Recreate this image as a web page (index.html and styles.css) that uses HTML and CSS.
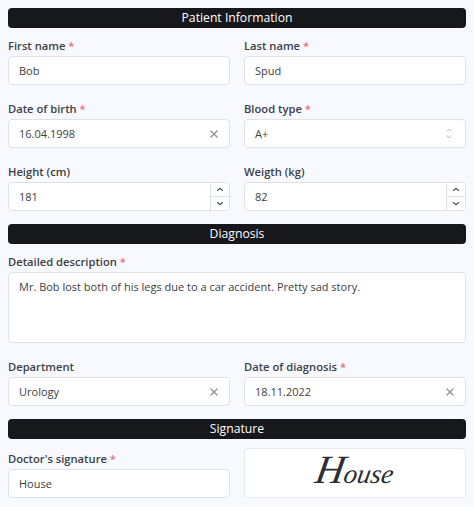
FILE: index.html
```html
<!DOCTYPE html>
<html lang="en">
<head>
    <meta charset="UTF-8">
    <meta name="viewport" content="width=device-width, initial-scale=1.0">
    <title>Patient form</title>
    <link rel="stylesheet" href="styles.css">
</head>
<body>
    <form class="form">
        <h2 class="section-title">Patient Information</h2>
        <div class="row">
            <div class="field">
                <label class="field-label">First name <span class="required">*</span></label>
                <div class="control">Bob</div>
            </div>
            <div class="field">
                <label class="field-label">Last name <span class="required">*</span></label>
                <div class="control">Spud</div>
            </div>
        </div>
        <div class="row">
            <div class="field">
                <label class="field-label">Date of birth <span class="required">*</span></label>
                <div class="control">
                    <span>16.04.1998</span>
                    <svg class="clear" viewBox="0 0 10 10"><path d="M1.5 1.5l7 7M8.5 1.5l-7 7"/></svg>
                </div>
            </div>
            <div class="field">
                <label class="field-label">Blood type <span class="required">*</span></label>
                <div class="control">
                    <span>A+</span>
                    <svg class="select-arrows" viewBox="0 0 10 16"><path d="M2 5.5L5 2.5l3 3M2 10.5l3 3 3-3"/></svg>
                </div>
            </div>
        </div>
        <div class="row">
            <div class="field">
                <label class="field-label">Height (cm)</label>
                <div class="control control-number">
                    <span class="number-value">181</span>
                    <div class="stepper">
                        <button type="button" class="step"><svg viewBox="0 0 10 6"><path d="M1.5 4.5L5 1.5l3.5 3"/></svg></button>
                        <button type="button" class="step"><svg viewBox="0 0 10 6"><path d="M1.5 1.5L5 4.5l3.5-3"/></svg></button>
                    </div>
                </div>
            </div>
            <div class="field">
                <label class="field-label">Weigth (kg)</label>
                <div class="control control-number">
                    <span class="number-value">82</span>
                    <div class="stepper">
                        <button type="button" class="step"><svg viewBox="0 0 10 6"><path d="M1.5 4.5L5 1.5l3.5 3"/></svg></button>
                        <button type="button" class="step"><svg viewBox="0 0 10 6"><path d="M1.5 1.5L5 4.5l3.5-3"/></svg></button>
                    </div>
                </div>
            </div>
        </div>

        <h2 class="section-title">Diagnosis</h2>
        <div class="row">
            <div class="field">
                <label class="field-label">Detailed description <span class="required">*</span></label>
                <div class="control control-area">Mr. Bob lost both of his legs due to a car accident. Pretty sad story.</div>
            </div>
        </div>
        <div class="row">
            <div class="field">
                <label class="field-label">Department</label>
                <div class="control">
                    <span>Urology</span>
                    <svg class="clear" viewBox="0 0 10 10"><path d="M1.5 1.5l7 7M8.5 1.5l-7 7"/></svg>
                </div>
            </div>
            <div class="field">
                <label class="field-label">Date of diagnosis <span class="required">*</span></label>
                <div class="control">
                    <span>18.11.2022</span>
                    <svg class="clear" viewBox="0 0 10 10"><path d="M1.5 1.5l7 7M8.5 1.5l-7 7"/></svg>
                </div>
            </div>
        </div>

        <h2 class="section-title">Signature</h2>
        <div class="row row-signature">
            <div class="field">
                <label class="field-label">Doctor's signature <span class="required">*</span></label>
                <div class="control">House</div>
            </div>
            <div class="signature-box"><span class="signature"><span class="signature-initial">H</span>ouse</span></div>
        </div>
    </form>
</body>
</html>
```

FILE: styles.css
```css
body {
    margin: 0;
    background: #f8f9fe;
    color: #212529;
    font-family: "Open Sans", "Noto Sans", sans-serif;
    font-size: 11px;
}

.form {
    padding: 8px 8px 0;
}

.section-title {
    margin: 13px 0 9px;
    height: 20px;
    line-height: 20px;
    background: #17181c;
    border-radius: 4px;
    color: #fff;
    font-size: 12.2px;
    font-weight: 400;
    text-align: center;
}

.section-title:first-child {
    margin-top: 0;
}

.row {
    display: flex;
    gap: 14px;
}

.row + .row {
    margin-top: 15px;
}

.row-signature {
    align-items: flex-end;
}

.field {
    flex: 1 1 50%;
    min-width: 0;
}

.field-label {
    display: block;
    height: 18px;
    line-height: 18px;
    margin-bottom: 1px;
    color: #3a3f45;
    font-size: 11.2px;
    font-weight: 600;
}

.required {
    color: #e2717c;
}

.control {
    display: flex;
    align-items: center;
    justify-content: space-between;
    box-sizing: border-box;
    height: 29px;
    padding: 0 10px;
    background: #fff;
    border: 1px solid #dee2e6;
    border-radius: 4px;
    color: #3b3f44;
}

.control-number {
    padding: 0 0 0 10px;
    overflow: hidden;
}

.control-area {
    display: block;
    height: 71px;
    padding: 5px 10px;
    line-height: 18px;
}

.clear {
    width: 10px;
    height: 10px;
    fill: none;
    stroke: #8a8f94;
    stroke-width: 1.2;
}

.select-arrows {
    width: 8px;
    height: 13px;
    margin-right: 2px;
    fill: none;
    stroke: #a3a8ad;
    stroke-width: 1;
}

.stepper {
    display: flex;
    flex-direction: column;
    width: 18px;
    height: 100%;
    border-left: 1px solid #dee2e6;
}

.step {
    flex: 1;
    display: flex;
    align-items: center;
    justify-content: center;
    padding: 0;
    background: #fff;
    border: 0;
}

.step + .step {
    border-top: 1px solid #dee2e6;
}

.step svg {
    width: 8px;
    height: 5px;
    fill: none;
    stroke: #4a4f54;
    stroke-width: 1.4;
}

.signature-box {
    flex: 1 1 50%;
    min-width: 0;
    display: flex;
    align-items: center;
    justify-content: center;
    box-sizing: border-box;
    height: 50px;
    padding-bottom: 6px;
    background: #fff;
    border: 1px solid #e4e7ec;
    border-radius: 4px;
}

.signature {
    color: #2c2e32;
    font-family: "Liberation Serif", serif;
    font-size: 27px;
    font-style: italic;
    transform: skewX(-10deg);
}

.signature-initial {
    font-size: 40px;
    line-height: 1;
}
```
